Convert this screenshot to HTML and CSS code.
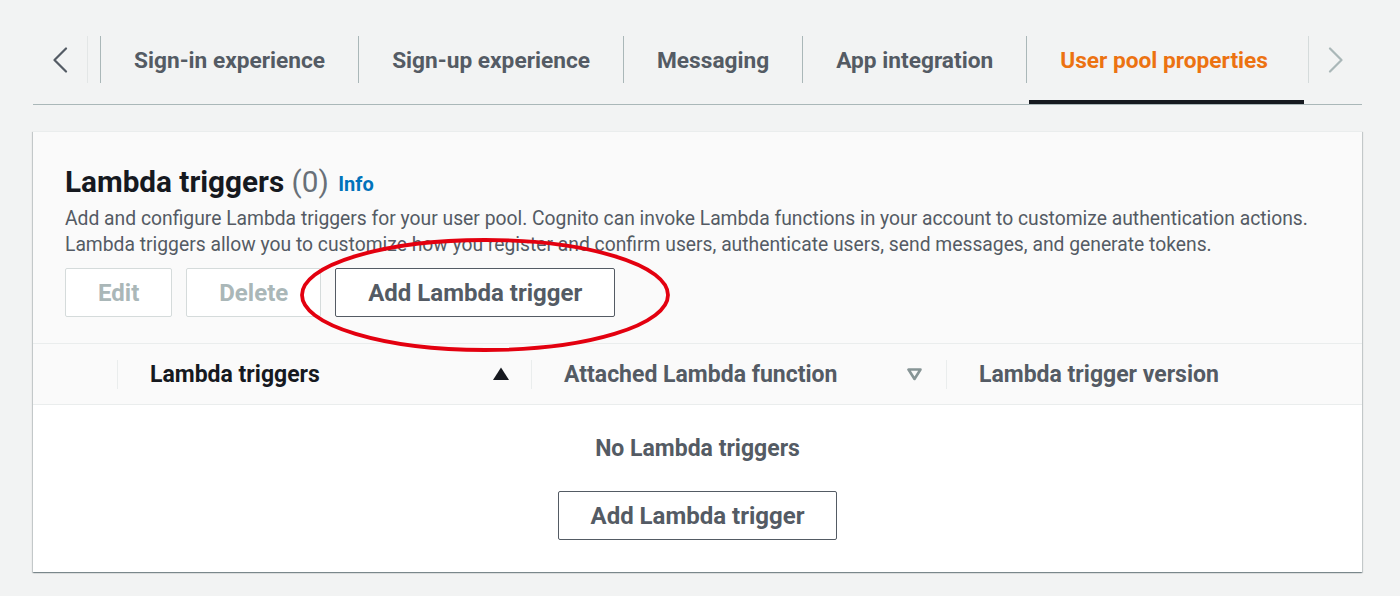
FILE: index.html
```html
<!DOCTYPE html>
<html lang="en">
<head>
<meta charset="utf-8">
<title>Lambda triggers</title>
<link rel="stylesheet" href="styles.css">
</head>
<body>
<div class="screen">
  <nav class="tabs">
    <button class="scroll-btn scroll-left" aria-label="Scroll left">
      <svg width="16" height="26" viewBox="0 0 16 26"><polyline points="14,1.5 2.5,13 14,24.5" fill="none" stroke="#545b64" stroke-width="2.2" stroke-linecap="round" stroke-linejoin="round"/></svg>
    </button>
    <div class="tab-strip">
      <div class="tab"><span class="tab-label">Sign-in experience</span><span class="tab-bar"></span></div>
      <div class="tab"><span class="tab-label">Sign-up experience</span><span class="tab-bar"></span></div>
      <div class="tab"><span class="tab-label">Messaging</span><span class="tab-bar"></span></div>
      <div class="tab"><span class="tab-label">App integration</span><span class="tab-bar"></span></div>
      <div class="tab active"><span class="tab-label">User pool properties</span><span class="tab-bar"></span></div>
    </div>
    <button class="scroll-btn scroll-right" aria-label="Scroll right">
      <svg width="16" height="26" viewBox="0 0 16 26"><polyline points="2,1.5 13.5,13 2,24.5" fill="none" stroke="#aab7b8" stroke-width="2.2" stroke-linecap="round" stroke-linejoin="round"/></svg>
    </button>
  </nav>

  <section class="card">
    <header class="card-header">
      <h2 class="title">Lambda triggers <span class="counter">(0)</span> <a class="info" href="#">Info</a></h2>
      <p class="desc">Add and configure Lambda triggers for your user pool. Cognito can invoke Lambda functions in your account to customize authentication actions. Lambda triggers allow you to customize how you register and confirm users, authenticate users, send messages, and generate tokens.</p>
      <div class="actions">
        <button class="btn disabled">Edit</button>
        <button class="btn disabled">Delete</button>
        <button class="btn">Add Lambda trigger</button>
      </div>
    </header>

    <div class="table-head">
      <div class="th th-select"></div>
      <div class="th"><div class="th-inner sorted"><span>Lambda triggers</span>
        <svg class="sort-icon" width="16" height="14" viewBox="0 0 16 14"><polygon points="0,13 8,0.5 16,13" fill="#16191f"/></svg></div></div>
      <div class="th"><div class="th-inner"><span>Attached Lambda function</span>
        <svg class="sort-icon sort-icon-b" width="15" height="13" viewBox="0 0 15 13"><polygon points="1.5,1.5 13.5,1.5 7.5,11" fill="none" stroke="#879596" stroke-width="2.6" stroke-linejoin="round"/></svg></div></div>
      <div class="th"><div class="th-inner"><span>Lambda trigger version</span></div></div>
    </div>

    <div class="table-empty">
      <p class="empty-text">No Lambda triggers</p>
      <button class="btn">Add Lambda trigger</button>
    </div>
  </section>

  <svg class="highlight" width="380" height="126" viewBox="0 0 380 126" aria-hidden="true">
    <ellipse cx="190" cy="63" rx="183" ry="55" fill="none" stroke="#e3000f" stroke-width="3.8"/>
  </svg>
</div>
</body>
</html>
```

FILE: styles.css
```css
* { box-sizing: border-box; }

html, body {
  margin: 0;
  padding: 0;
}

body {
  background: #f2f3f3;
  font-family: Roboto, "Liberation Sans", Arial, sans-serif;
  color: #16191f;
}

.screen {
  position: relative;
  padding: 0 38px 0 33px;
  height: 596px;
  overflow: hidden;
}

/* Tabs */
.tabs {
  display: flex;
  align-items: flex-start;
  padding-top: 36px;
  border-bottom: 1px solid #aab7b8;
}

.scroll-btn {
  flex: none;
  width: 54px;
  height: 47px;
  padding: 0;
  border: none;
  background: transparent;
  display: flex;
  align-items: center;
  justify-content: center;
}

.scroll-left {
  border-right: 1px solid #e3e6e6;
  margin-right: 12px;
  width: 55px;
}

.scroll-right {
  border-left: 1px solid #d5dbdb;
}

.tab-strip {
  flex: 1;
  display: flex;
  overflow: hidden;
  white-space: nowrap;
}

.tab {
  display: flex;
  flex-direction: column;
}

.tab:last-child { flex-grow: 1; }

.tab-label {
  height: 47px;
  display: flex;
  align-items: center;
  padding: 1px 33px 0;
  border-left: 1px solid #aab7b8;
  font-weight: 700;
  font-size: 22.7px;
  color: #545b64;
}

.tab-bar {
  height: 4px;
  margin: 17px 4px 0 3px;
  background: transparent;
}

.tab.active .tab-label { color: #ec7211; }
.tab.active .tab-bar { background: #16191f; }

/* Card */
.card {
  margin-top: 26px;
  background: #fff;
  border-top: 1px solid #eaeded;
  box-shadow: 0 1px 1px 0 rgba(0, 28, 36, 0.3), 1px 1px 1px 0 rgba(0, 28, 36, 0.15), -1px 1px 1px 0 rgba(0, 28, 36, 0.15);
}

.card-header {
  background: #fafafa;
  padding: 34px 32px 26px;
  border-bottom: 1px solid #eaeded;
}

.title {
  margin: 0;
  font-size: 29.7px;
  line-height: 32px;
  font-weight: 700;
  color: #16191f;
}

.counter {
  font-weight: 400;
  color: #687078;
}

.info {
  margin-left: 2px;
  font-size: 20px;
  font-weight: 700;
  color: #0073bb;
  text-decoration: none;
  vertical-align: 1px;
}

.desc {
  margin: 6px 0 0;
  font-size: 19.3px;
  line-height: 26px;
  color: #545b64;
}

.actions {
  display: flex;
  gap: 14px;
  margin-top: 10px;
}

.btn {
  height: 49px;
  padding: 0 32px;
  border: 1px solid #545b64;
  border-radius: 2px;
  background: #fff;
  font-family: inherit;
  font-size: 24px;
  font-weight: 700;
  color: #545b64;
}

.btn.disabled {
  border-color: #d5dbdb;
  color: #aab7b8;
}

/* Table */
.table-head {
  display: grid;
  grid-template-columns: 84px 414px 415px 1fr;
  height: 61px;
  background: #fafafa;
  border-bottom: 1px solid #eaeded;
}

.th {
  display: flex;
  align-items: center;
}

.th-inner {
  flex: 1;
  height: 29px;
  display: flex;
  align-items: center;
  justify-content: space-between;
  padding: 0 22px 0 32px;
  border-left: 1px solid #eaeded;
  font-size: 23px;
  font-weight: 700;
  color: #545b64;
  white-space: nowrap;
}

.th-inner.sorted { color: #16191f; }

.sort-icon-b { margin-right: 2px; }

.table-empty {
  height: 167px;
  display: flex;
  flex-direction: column;
  align-items: center;
  padding-top: 30px;
}

.empty-text {
  margin: 0 0 28px;
  font-size: 23px;
  line-height: 28px;
  font-weight: 700;
  color: #545b64;
}

/* Red annotation ellipse */
.highlight {
  position: absolute;
  left: 295px;
  top: 232px;
}
```
